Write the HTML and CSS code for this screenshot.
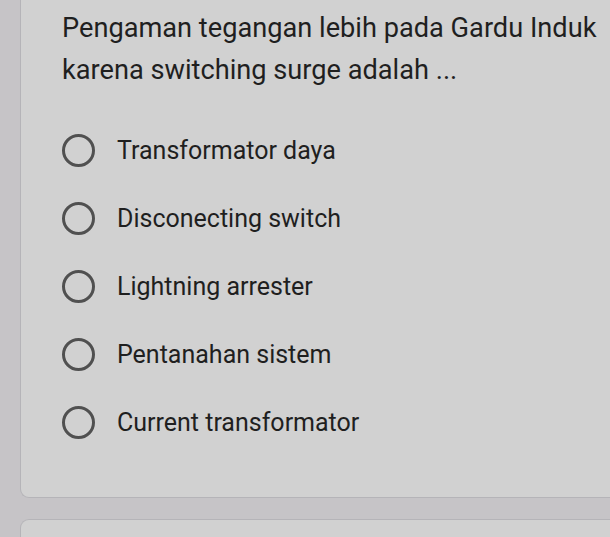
FILE: index.html
```html
<!DOCTYPE html>
<html>
<head>
<meta charset="utf-8">
<link rel="stylesheet" href="styles.css">
</head>
<body>
<div class="page">
  <div class="card">
    <div class="question">Pengaman tegangan lebih pada Gardu Induk karena switching surge adalah ...</div>
    <div class="options">
      <div class="option"><span class="radio"></span><span class="label">Transformator daya</span></div>
      <div class="option"><span class="radio"></span><span class="label">Disconecting switch</span></div>
      <div class="option"><span class="radio"></span><span class="label">Lightning arrester</span></div>
      <div class="option"><span class="radio"></span><span class="label">Pentanahan sistem</span></div>
      <div class="option"><span class="radio"></span><span class="label">Current transformator</span></div>
    </div>
  </div>
  <div class="card next"></div>
</div>
</body>
</html>
```
FILE: styles.css
```css
html, body {
  margin: 0;
  padding: 0;
  background: #c6c4c7;
  font-family: Roboto, "Liberation Sans", sans-serif;
  overflow: hidden;
}
.page {
  padding-left: 20px;
  display: flex;
  flex-direction: column;
  gap: 21px;
  margin-top: -20px;
}
.card {
  background: #d1d1d1;
  border: 1px solid #b5b4b8;
  border-right: none;
  border-radius: 0 0 0 9px;
  padding: 26px 0 52px 41px;
}
.card.next {
  border-radius: 9px 0 0 0;
  border-bottom: none;
  height: 17px;
  padding: 0;
}
.question {
  font-size: 27.2px;
  line-height: 42px;
  color: #1f1f1f;
  width: 548px;
}
.options {
  margin-top: 36px;
  display: flex;
  flex-direction: column;
  gap: 22px;
}
.option {
  display: flex;
  align-items: center;
  height: 46px;
}
.radio {
  width: 27px;
  height: 27px;
  border: 3px solid #505050;
  border-radius: 50%;
  flex: none;
}
.label {
  margin-left: 22px;
  font-size: 25px;
  color: #1f1f1f;
}
```
